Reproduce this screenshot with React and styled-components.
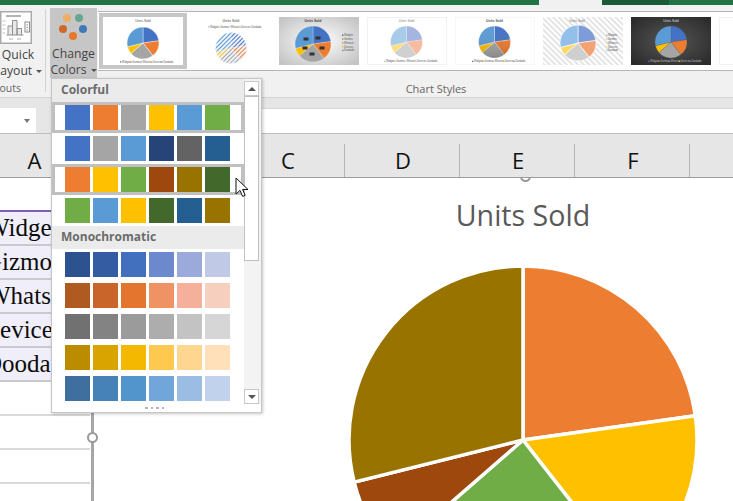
import React from "react";
import styled, { createGlobalStyle } from "styled-components";

const Global = createGlobalStyle`
  html, body { margin: 0; padding: 0; background: #fff; }
  #root { width: 733px; height: 501px; overflow: hidden; }
`;

const Page = styled.div`
  position: relative;
  width: 733px;
  height: 501px;
  overflow: hidden;
  font-family: "Open Sans", "Liberation Sans", sans-serif;
  display: flex;
  flex-direction: column;
`;

/* ---------- title strip ---------- */
const TopStrip = styled.div`
  display: flex;
  height: 5px;
  flex: none;
`;
const StripPart = styled.div`
  width: ${p => p.$w}px;
  flex: ${p => (p.$w ? "none" : 1)};
  background: ${p => p.$c};
`;

/* ---------- ribbon ---------- */
const Ribbon = styled.div`
  display: flex;
  flex: none;
  height: 92px;
  background: #f1f1f1;
`;
const LayoutsGroup = styled.div`
  width: 45px;
  margin-top: 4px;
  height: 88px;
  flex: none;
  display: flex;
  flex-direction: column;
  overflow: hidden;
`;
const GroupDivider = styled.div`
  flex: none;
  width: 1px;
  height: 83px;
  margin-top: 4px;
  background: #d2d2d2;
`;
const QuickButton = styled.div`
  width: 36px;
  display: flex;
  flex-direction: column;
  align-items: center;
  padding-top: 2px;
`;
const ButtonLine = styled.div`
  font-size: 12.2px;
  line-height: 16px;
  height: 16px;
  color: #444;
  white-space: nowrap;
  display: flex;
  align-items: center;
  gap: 4px;
`;
const Caret = styled.span`
  width: 0;
  height: 0;
  border-left: 3px solid transparent;
  border-right: 3px solid transparent;
  border-top: 3px solid #555;
  margin-top: 1px;
`;
const GroupLabel = styled.div`
  font-size: 11px;
  line-height: 16px;
  color: #666;
  white-space: nowrap;
  text-align: center;
`;
const ClippedLabel = styled(GroupLabel)`
  margin-top: 1px;
  width: 21px;
  font-size: 10.5px;
  direction: rtl;
`;
const ColorsButton = styled.div`
  flex: none;
  width: 47px;
  height: 70px;
  margin: 3px 1px 0 4px;
  background: #c6c6c6;
  display: flex;
  flex-direction: column;
  align-items: center;
`;
const StylesGroup = styled.div`
  flex: none;
  width: 676px;
  margin-top: 6px;
  display: flex;
  flex-direction: column;
`;
const Gallery = styled.div`
  display: flex;
  gap: 8px;
  background: #fff;
  border-top: 1px solid #b4b4ba;
  border-bottom: 1px solid #b4b4ba;
  padding: 5px;
  height: 48px;
  margin-bottom: 10px;
`;
const ThumbBox = styled.div`
  flex: none;
  width: 80px;
  height: 48px;
  line-height: 0;
  outline: ${p => (p.$selected ? "4.5px solid #c6c6c6" : "none")};
  outline-offset: 0;
`;

/* ---------- formula bar ---------- */
const FormulaBar = styled.div`
  flex: none;
  height: 25px;
  padding-top: 10px;
  background: #e6e6e6;
  border-top: 1px solid #d2d2d2;
  display: flex;
  gap: 15px;
`;
const NameBox = styled.div`
  width: 36px;
  background: #fff;
  display: flex;
  align-items: center;
  justify-content: flex-end;
  padding-right: 6px;
  box-sizing: border-box;
`;
const NameCaret = styled.span`
  width: 0;
  height: 0;
  border-left: 3.5px solid transparent;
  border-right: 3.5px solid transparent;
  border-top: 4px solid #777;
`;
const FormulaInput = styled.div`
  flex: 1;
  background: #fff;
  border-top: 1px solid #d6d6d6;
`;

/* ---------- column headers ---------- */
const ColumnHeader = styled.div`
  flex: none;
  height: 45px;
  box-sizing: border-box;
  background: #e6e6e6;
  border-top: 1px solid #bdbdbd;
  border-bottom: 1px solid #9c9c9c;
  display: flex;
  padding-top: 10px;
  overflow: hidden;
`;
const ColumnCell = styled.div`
  flex: none;
  box-sizing: border-box;
  width: ${p => p.$w}px;
  margin-left: ${p => p.$ml || 0}px;
  height: 33px;
  padding-left: 2px;
  border-right: 1px solid #b4b4b4;
  text-align: center;
  font-size: 22px;
  line-height: 33px;
  color: #111;
`;

/* ---------- sheet ---------- */
const Sheet = styled.div`
  position: relative;
  flex: 1;
  background: #fff;
  overflow: hidden;
  padding-top: 32px;
`;
const GridColumn = styled.div`
  width: 90px;
  overflow: hidden;
`;
const DataRow = styled.div`
  box-sizing: border-box;
  height: 34px;
  background: #f0eef8;
  border-bottom: 2px solid #c9c9d0;
  font-family: "Liberation Serif", serif;
  font-size: 25px;
  line-height: 32px;
  color: #0c0c0c;
  white-space: nowrap;
  text-indent: ${p => p.$shift}px;
  &:first-child { border-top: 2px solid #7f5db5; height: 36px; }
  &:last-of-type { border-bottom: 2px solid #7f5db5; }
`;
const EmptyRow = styled.div`
  box-sizing: border-box;
  height: 34px;
  border-bottom: 2px solid #d9d9d9;
`;

/* chart floats on the sheet */
const Chart = styled.div`
  position: absolute;
  left: 91px;
  top: -2px;
  width: 864px;
  height: 522px;
  box-sizing: border-box;
  background: #fff;
  border-left: 3px solid #a6a6a6;
  display: flex;
  flex-direction: column;
  align-items: center;
`;
const ChartTitle = styled.div`
  margin: 19px 0 0 -3px;
  height: 40px;
  font-size: 28.6px;
  line-height: 40px;
  color: #595959;
  white-space: nowrap;
`;
const PieBox = styled.div`
  margin-top: 30px;
  width: 350px;
  height: 350px;
  margin-left: -3px;
  line-height: 0;
  svg { overflow: visible; }
`;
const Handle = styled.div`
  position: absolute;
  box-sizing: border-box;
  width: 11px;
  height: 11px;
  border-radius: 50%;
  background: #fff;
  border: 2px solid #999;
  ${p => p.$side === "top" ? "left: 426px; top: -5px;" : "left: -7px; top: 256px;"}
`;

/* ---------- dropdown ---------- */
const Menu = styled.div`
  position: absolute;
  left: 51px;
  top: 78px;
  width: 211px;
  height: 335px;
  box-sizing: border-box;
  background: #fff;
  border: 1px solid #c6c6c6;
  box-shadow: 1px 1px 3px rgba(0,0,0,.22);
  display: flex;
  flex-direction: column;
  overflow: hidden;
`;
const MenuBody = styled.div`
  display: flex;
  flex: none;
  height: 325px;
`;
const MenuList = styled.div`
  width: 192px;
  flex: none;
  overflow: hidden;
`;
const MenuHeading = styled.div`
  height: 23px;
  background: #ebebeb;
  font-size: 12px;
  font-weight: 700;
  line-height: 22px;
  padding-left: 9px;
  color: #6b6b6b;
`;
const SwatchRow = styled.div`
  box-sizing: border-box;
  height: 31px;
  border: 3px solid ${p => (p.$active ? "#c0c0c0" : "transparent")};
  display: flex;
  gap: 3px;
  padding-left: 10px;
`;
const Swatch = styled.div`
  width: 25px;
  height: 25px;
  flex: none;
  background: ${p => p.$c};
`;
const ScrollBar = styled.div`
  width: 17px;
  padding-top: 2px;
  flex: none;
  background: #f3f3f3;
  display: flex;
  flex-direction: column;
`;
const ScrollButton = styled.div`
  box-sizing: border-box;
  width: 15px;
  height: 15px;
  flex: none;
  background: #fff;
  border: 1px solid #c8c8c8;
  display: flex;
  align-items: center;
  justify-content: center;
`;
const ArrowUp = styled.span`
  width: 0; height: 0;
  border-left: 4px solid transparent;
  border-right: 4px solid transparent;
  border-bottom: 4px solid #555;
`;
const ArrowDown = styled.span`
  width: 0; height: 0;
  border-left: 4px solid transparent;
  border-right: 4px solid transparent;
  border-top: 4px solid #555;
`;
const ScrollThumb = styled.div`
  box-sizing: border-box;
  width: 15px;
  height: 165px;
  flex: none;
  background: #fff;
  border: 1px solid #c0c0c0;
`;
const ScrollTrack = styled.div`
  flex: 1;
`;
const Grip = styled.div`
  flex: 1;
  display: flex;
  justify-content: center;
  align-items: center;
  gap: 3px;
  padding-right: 4px;
`;
const GripDot = styled.span`
  width: 2.5px;
  height: 2px;
  background: #b5b5b5;
`;
const Cursor = styled.svg`
  position: absolute;
  left: 235px;
  top: 177px;
`;

/* ---------- drawings ---------- */
const angles = [0, 82, 142, 229, 256, 360];
const pt = (cx, cy, r, d) => {
  const a = (d * Math.PI) / 180;
  return [cx + r * Math.sin(a), cy - r * Math.cos(a)];
};
const slice = (cx, cy, r, a, b) => {
  const [x1, y1] = pt(cx, cy, r, a);
  const [x2, y2] = pt(cx, cy, r, b);
  return `M${cx} ${cy}L${x1.toFixed(2)} ${y1.toFixed(2)}A${r} ${r} 0 ${b - a > 180 ? 1 : 0} 1 ${x2.toFixed(2)} ${y2.toFixed(2)}Z`;
};
const Pie = ({ cx, cy, r, colors, stroke, sw, order = angles }) => (
  <g>
    {colors.map((c, i) => (
      <path key={i} d={slice(cx, cy, r, order[i], order[i + 1])} fill={c} stroke={stroke} strokeWidth={sw} />
    ))}
  </g>
);

const base = ["#4472c4", "#ed7d31", "#a5a5a5", "#ffc000", "#5b9bd5"];
const pale = ["#a3b5e0", "#f6bca0", "#d0d0d0", "#ffdf80", "#a8cbea"];
const names = ["Widgets", "Gizmos", "Whatsits", "Devices", "Doodads"];

const LegendBottom = ({ y, fill = "#555", colors }) => (
  <g>
    {names.map((n, i) => (
      <g key={n}>
        <rect x={17 + i * 10.3} y={y - 1.3} width="1.3" height="1.3" fill={colors[i]} />
        <text x={19 + i * 10.3} y={y} fontSize="2.6" fill={fill} fontFamily="Liberation Sans">{n}</text>
      </g>
    ))}
  </g>
);
const LegendRight = ({ colors, fill = "#555" }) => (
  <g>
    {names.map((n, i) => (
      <g key={n}>
        <rect x="63" y={17.5 + i * 3.8} width="1.5" height="1.5" fill={colors[i]} />
        <text x="65" y={19.2 + i * 3.8} fontSize="2.6" fill={fill} fontFamily="Liberation Sans">{n}</text>
      </g>
    ))}
  </g>
);
const ThumbTitle = ({ x = 40, y = 5, fill = "#555", bold }) => (
  <text x={x} y={y} fontSize="3.4" textAnchor="middle" fill={fill} fontWeight={bold ? 700 : 400} fontFamily="Liberation Sans">Units Sold</text>
);

const ThumbSvg = ({ children }) => (
  <svg width="80" height="48" viewBox="0 0 80 48">{children}</svg>
);

const Thumbs = [
  () => (
    <ThumbSvg>
      <rect width="80" height="48" fill="#fff" />
      <ThumbTitle />
      <Pie cx={40} cy={26} r={16} colors={base} stroke="#fff" sw={0.4} />
      <LegendBottom y={45.5} colors={base} />
    </ThumbSvg>
  ),
  () => (
    <ThumbSvg>
      <defs>
        {base.map((c, i) => (
          <pattern key={c} id={`hatch${i}`} width="3" height="3" patternUnits="userSpaceOnUse" patternTransform="rotate(-45)">
            <rect width="3" height="3" fill="#eef2f8" />
            <rect width="3" height="1" fill={c} />
          </pattern>
        ))}
      </defs>
      <rect width="80" height="48" fill="#fff" />
      <ThumbTitle y={5} bold fill="#777" />
      <LegendBottom y={10.5} colors={pale} />
      <Pie cx={40} cy={31} r={15.5} colors={[0, 1, 2, 3, 4].map(i => `url(#hatch${i})`)} stroke="#eef2f8" sw={0.3} />
    </ThumbSvg>
  ),
  () => (
    <ThumbSvg>
      <defs>
        <radialGradient id="silver" cx="50%" cy="50%" r="65%">
          <stop offset="0" stopColor="#fff" />
          <stop offset="1" stopColor="#c4c4c4" />
        </radialGradient>
      </defs>
      <rect width="80" height="48" fill="url(#silver)" />
      <ThumbTitle x={34} y={5} bold fill="#444" />
      <Pie cx={34} cy={27} r={18} colors={base} stroke="#e8e8e8" sw={0.3} />
      {[[39, 21], [43, 31], [33, 37], [26, 31], [27, 22]].map(([x, y], i) => (
        <rect key={i} x={x - 2.5} y={y - 1.5} width="5" height="3" fill="#333" />
      ))}
      <LegendRight colors={base} />
    </ThumbSvg>
  ),
  () => (
    <ThumbSvg>
      <rect x="0.5" y="0.5" width="79" height="47" fill="#fff" stroke="#f2f2f2" />
      <ThumbTitle x={39.5} y={4.5} fill="#888" />
      <Pie cx={39.5} cy={25} r={16} colors={pale} stroke="#fff" sw={0.2} />
      <LegendBottom y={45} colors={pale} />
    </ThumbSvg>
  ),
  () => (
    <ThumbSvg>
      <defs>
        <linearGradient id="shade" x1="0" y1="0" x2="0" y2="1">
          <stop offset="0" stopColor="#fff" stopOpacity="0" />
          <stop offset="1" stopColor="#000" stopOpacity=".18" />
        </linearGradient>
      </defs>
      <rect x="0.5" y="0.5" width="79" height="47" fill="#fff" stroke="#f6f6f6" />
      <ThumbTitle x={39.5} y={4.5} bold />
      <Pie cx={39.5} cy={25} r={16} colors={base} stroke="#fff" sw={0.3} />
      <circle cx="39.5" cy="25" r="16" fill="url(#shade)" />
      <LegendBottom y={45} colors={base} />
    </ThumbSvg>
  ),
  () => (
    <ThumbSvg>
      <defs>
        <pattern id="stripes" width="4" height="4" patternUnits="userSpaceOnUse" patternTransform="rotate(45)">
          <rect width="4" height="4" fill="#fff" />
          <rect width="4" height="1.8" fill="#e2e2e2" />
        </pattern>
      </defs>
      <rect width="80" height="48" fill="url(#stripes)" />
      <ThumbTitle x={34} y={5} fill="#777" />
      <Pie cx={35} cy={26} r={18} colors={["#7f9cd8", "#f3a274", "#cfcfcf", "#ffd966", "#93c0e8"]} stroke="#fff" sw={0.6} />
      <LegendRight colors={pale} />
    </ThumbSvg>
  ),
  () => (
    <ThumbSvg>
      <defs>
        <radialGradient id="dark" cx="50%" cy="50%" r="65%">
          <stop offset="0" stopColor="#565656" />
          <stop offset="1" stopColor="#2b2b2b" />
        </radialGradient>
      </defs>
      <rect width="80" height="48" fill="url(#dark)" />
      <ThumbTitle x={40} y={4.5} fill="#ddd" />
      <Pie cx={40} cy={25} r={16} colors={base} stroke="#555" sw={0.2} />
      <LegendBottom y={45} colors={base} fill="#bbb" />
    </ThumbSvg>
  ),
  () => (
    <ThumbSvg>
      <rect x="0.5" y="0.5" width="79" height="47" fill="#fff" stroke="#f2f2f2" />
    </ThumbSvg>
  ),
];

const QuickIconSvg = styled.svg`
  margin-left: -4px;
  margin-bottom: 3px;
  flex: none;
`;
const QuickIcon = () => (
  <QuickIconSvg width="32" height="33" viewBox="0 0 32 33">
    <rect x="0.75" y="0.75" width="30.5" height="31.5" fill="#fff" stroke="#ababab" strokeWidth="1.5" />
    <path d="M6 5h15" stroke="#a0a0a0" strokeWidth="1.6" />
    <path d="M2.5 10h3M2.5 14h3M2.5 18h3M2.5 22h3" stroke="#c4c4c4" strokeWidth="1" />
    <path d="M8 24V15h4.5v9M12.5 24V9.5h4.5V24M17 24v-6.5h4.5V24M6.5 24h17" fill="#e8e8e8" stroke="#8f8f8f" strokeWidth="1" />
    <path d="M9 28h4M17 28h4" stroke="#b0b0b0" strokeWidth="1" />
    <rect x="25" y="11" width="4.5" height="10" fill="#fff" stroke="#8a8a8a" strokeWidth="1" />
    <path d="M26.5 14h1.5M26.5 16.5h1.5M26.5 19h1.5" stroke="#8a8a8a" strokeWidth="0.9" />
  </QuickIconSvg>
);

const ColorsIconSvg = styled.svg`
  flex: none;
`;
const ColorsIcon = () => (
  <ColorsIconSvg width="47" height="38" viewBox="0 0 47 38">
    <circle cx="17" cy="10" r="4" fill="#eeae63" />
    <circle cx="29" cy="10" r="4" fill="#68a78f" />
    <circle cx="13" cy="21" r="4" fill="#cd6a28" />
    <circle cx="33" cy="21" r="4" fill="#3f79b8" />
    <circle cx="23" cy="28" r="4" fill="#e8772a" />
  </ColorsIconSvg>
);

const colorful = [
  { active: true, c: ["#4472c4", "#ed7d31", "#a5a5a5", "#ffc000", "#5b9bd5", "#70ad47"] },
  { c: ["#4472c4", "#a5a5a5", "#5b9bd5", "#264478", "#636363", "#255e91"] },
  { active: true, c: ["#ed7d31", "#ffc000", "#70ad47", "#9e480e", "#997300", "#43682b"] },
  { c: ["#70ad47", "#5b9bd5", "#ffc000", "#43682b", "#255e91", "#997300"] },
];
const mono = [
  ["#2d5290", "#345ca3", "#4270bf", "#6c89cd", "#9caadb", "#c0c9e6"],
  ["#ae5a21", "#c9652a", "#e3752e", "#ef9365", "#f4b09a", "#f7cfbf"],
  ["#707170", "#838383", "#9b9b9b", "#adadad", "#c3c3c3", "#d6d6d6"],
  ["#bc8c00", "#d9a300", "#f4b800", "#ffc84f", "#ffd68f", "#ffe0b8"],
  ["#3e6f9e", "#4681b8", "#5295cc", "#72a5d9", "#9cbde3", "#c1d3ec"],
];
const cells = [
  { t: "Widgets", s: -14 },
  { t: "Gizmos", s: -16 },
  { t: "Whatsits", s: -13 },
  { t: "Devices", s: -18 },
  { t: "Doodads", s: -16 },
];

const ColorRow = ({ colors, active }) => (
  <SwatchRow $active={active}>
    {colors.map((c, i) => <Swatch key={i} $c={c} />)}
  </SwatchRow>
);

export default function App() {
  return (
    <Page>
      <Global />
      <TopStrip>
        <StripPart $w={539} $c="#217346" />
        <StripPart $w={63} $c="#f1f1f1" />
        <StripPart $w={67} $c="#1a5c38" />
        <StripPart $c="#217346" />
      </TopStrip>

      <Ribbon>
        <LayoutsGroup>
          <QuickButton>
            <QuickIcon />
            <ButtonLine>Quick</ButtonLine>
            <ButtonLine>Layout<Caret /></ButtonLine>
          </QuickButton>
          <ClippedLabel>Layouts</ClippedLabel>
        </LayoutsGroup>
        <GroupDivider />
        <ColorsButton>
          <ColorsIcon />
          <ButtonLine>Change</ButtonLine>
          <ButtonLine>Colors<Caret /></ButtonLine>
        </ColorsButton>
        <StylesGroup>
          <Gallery>
            {Thumbs.map((T, i) => (
              <ThumbBox key={i} $selected={i === 0}><T /></ThumbBox>
            ))}
          </Gallery>
          <GroupLabel>Chart Styles</GroupLabel>
        </StylesGroup>
      </Ribbon>

      <FormulaBar>
        <NameBox><NameCaret /></NameBox>
        <FormulaInput />
      </FormulaBar>

      <ColumnHeader>
        <ColumnCell $w={162} $ml={-47}>A</ColumnCell>
        <ColumnCell $w={115}>B</ColumnCell>
        <ColumnCell $w={115}>C</ColumnCell>
        <ColumnCell $w={115}>D</ColumnCell>
        <ColumnCell $w={115}>E</ColumnCell>
        <ColumnCell $w={115}>F</ColumnCell>
        <ColumnCell $w={115}>G</ColumnCell>
      </ColumnHeader>

      <Sheet>
        <GridColumn>
          {cells.map(({ t, s }) => (
            <DataRow key={t} $shift={s}>{t}</DataRow>
          ))}
          <EmptyRow />
          <EmptyRow />
          <EmptyRow />
        </GridColumn>
        <Chart>
          <Handle $side="top" />
          <Handle $side="left" />
          <ChartTitle>Units Sold</ChartTitle>
          <PieBox>
            <svg width="350" height="350" viewBox="0 0 350 350">
              <Pie
                cx={175}
                cy={175}
                r={174}
                colors={["#ed7d31", "#ffc000", "#70ad47", "#9e480e", "#997300"]}
                stroke="#fff"
                sw={3.5}
              />
            </svg>
          </PieBox>
        </Chart>
      </Sheet>

      <Menu>
        <MenuBody>
          <MenuList>
            <MenuHeading>Colorful</MenuHeading>
            {colorful.map((r, i) => <ColorRow key={i} colors={r.c} active={r.active} />)}
            <MenuHeading>Monochromatic</MenuHeading>
            {mono.map((c, i) => <ColorRow key={i} colors={c} />)}
          </MenuList>
          <ScrollBar>
            <ScrollButton><ArrowUp /></ScrollButton>
            <ScrollThumb />
            <ScrollTrack />
            <ScrollButton><ArrowDown /></ScrollButton>
          </ScrollBar>
        </MenuBody>
        <Grip>
          <GripDot /><GripDot /><GripDot /><GripDot />
        </Grip>
      </Menu>

      <Cursor width="16" height="22" viewBox="0 0 16 22">
        <path d="M1 1v16l4-3.6 2.6 6 2.6-1.1-2.6-5.8H13z" fill="#fff" stroke="#111" strokeWidth="1" />
      </Cursor>
    </Page>
  );
}
